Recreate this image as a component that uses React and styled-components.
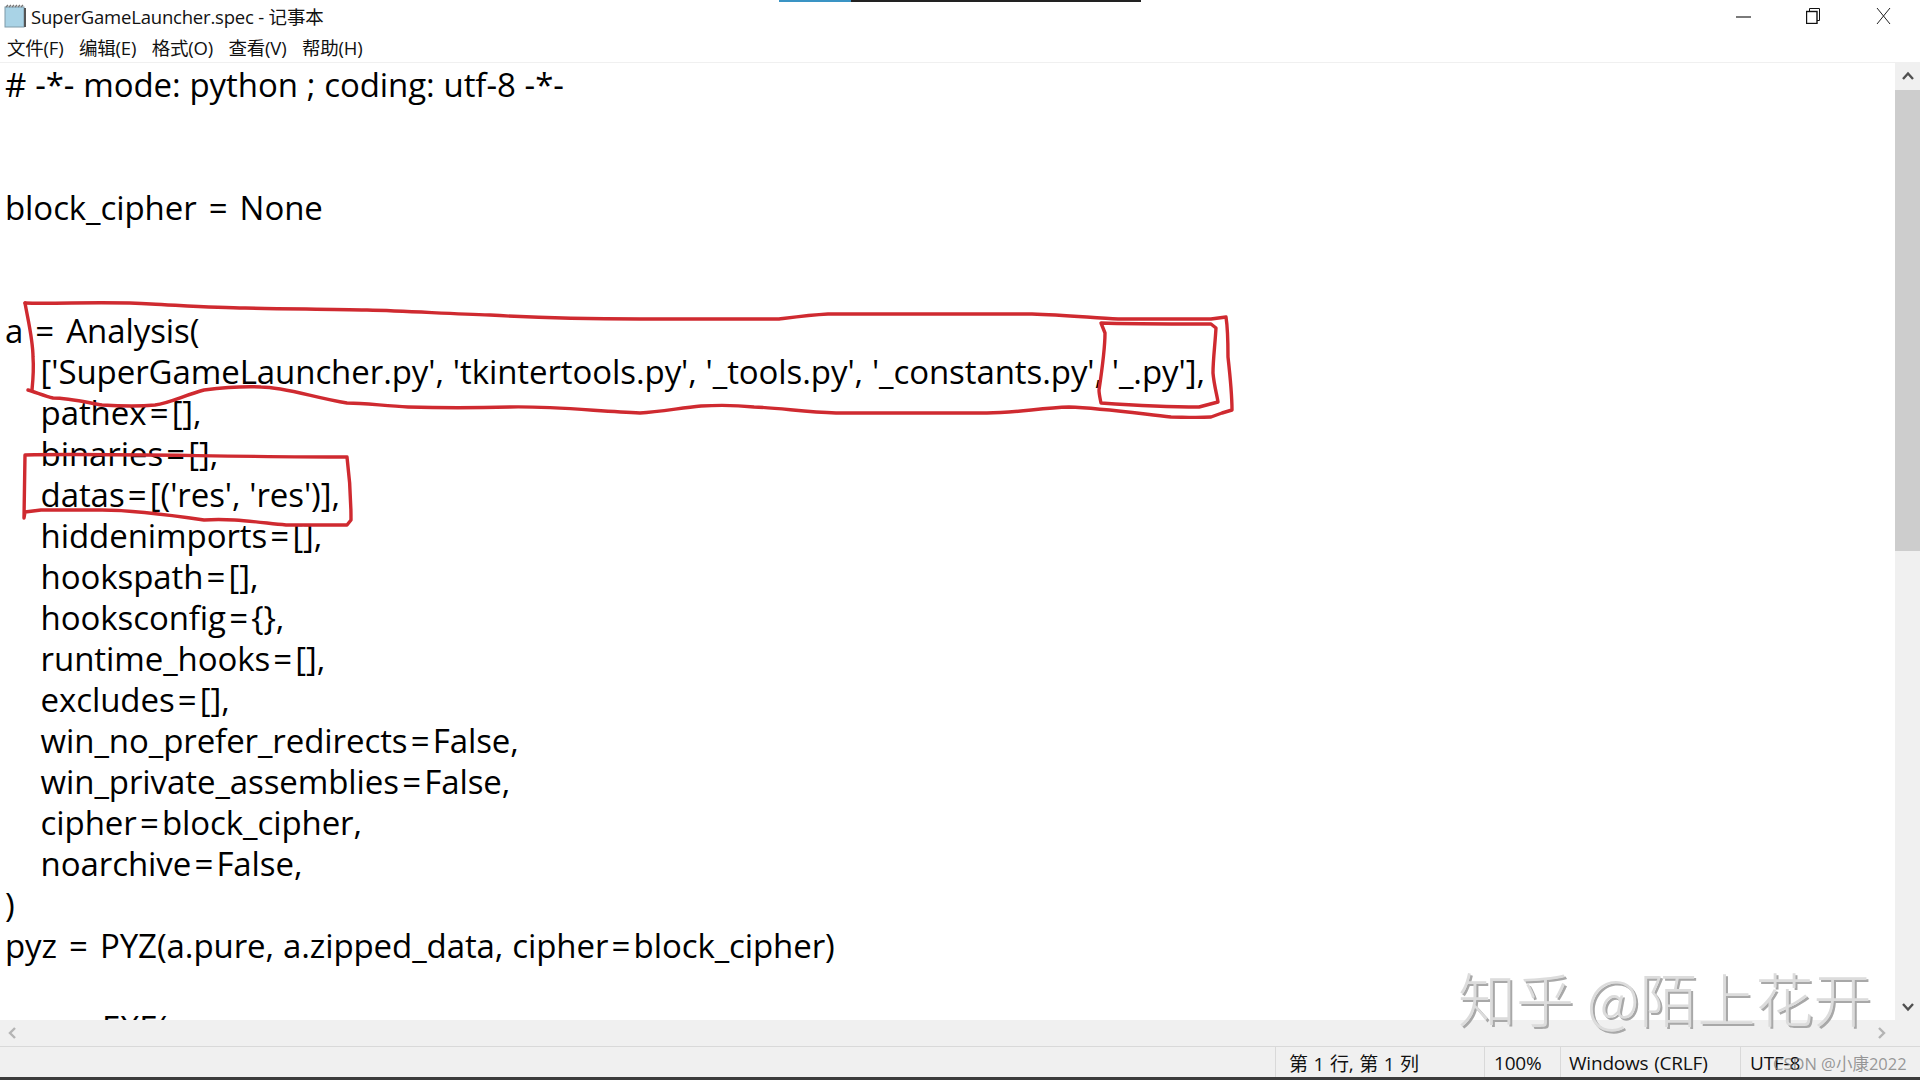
import styled, { createGlobalStyle } from 'styled-components';

const GlobalStyle = createGlobalStyle`
  html, body {
    margin: 0;
    padding: 0;
    background: #fff;
    overflow: hidden;
  }
`;

const uiFont = `"Open Sans", "Noto Sans CJK SC", sans-serif`;

const Window = styled.div`
  position: relative;
  width: 1920px;
  height: 1080px;
  display: flex;
  flex-flow: column;
  overflow: hidden;
  background: #fff;
  color: #000;
  font-family: ${uiFont};
`;

const TitleBar = styled.div`
  height: 32px;
  display: flex;
  align-items: center;
  padding-left: 3px;
  flex: none;
`;

const Title = styled.span`
  font-size: 18.5px;
  margin-left: 4px;
  color: #111;
  letter-spacing: -0.2px;
`;

const WindowButtons = styled.div`
  margin-left: auto;
  display: flex;
  align-items: center;
  gap: 55px;
  padding-right: 29px;
`;

const ProgressStrip = styled.div`
  position: absolute;
  top: 0;
  left: 779px;
  width: 362px;
  height: 2px;
  background: linear-gradient(to right, #3a94c4 72px, #222 72px);
`;

const MenuBar = styled.div`
  height: 30px;
  display: flex;
  align-items: center;
  gap: 15.5px;
  padding-left: 7px;
  flex: none;
  border-bottom: 1px solid #f0f0f0;
`;

const MenuItem = styled.span`
  font-size: 18.5px;
  color: #111;
  letter-spacing: -0.2px;
`;

const Body = styled.div`
  flex: 1;
  display: flex;
  min-height: 0;
`;

const Editor = styled.div`
  flex: 1;
  padding: 1px 0 0 5px;
  overflow: hidden;
  font-family: "Open Sans", sans-serif;
  font-size: 33px;
  letter-spacing: -0.08px;
  word-spacing: 0.4px;
  color: #000;
`;

const CodeLine = styled.div`
  height: 41px;
  line-height: 41px;
  white-space: pre;
`;

const VScroll = styled.div`
  width: 25px;
  flex: none;
  display: flex;
  flex-flow: column;
  background: #f0f0f0;
`;

const ScrollArrow = styled.div`
  height: ${(p) => p.$h}px;
  display: flex;
  align-items: center;
  justify-content: center;
  flex: none;
`;

const VThumb = styled.div`
  height: 461px;
  background: #cdcdcd;
  flex: none;
`;

const VTrack = styled.div`
  flex: 1;
`;

const HScroll = styled.div`
  height: 26px;
  flex: none;
  display: flex;
  align-items: center;
  justify-content: space-between;
  padding: 0 33px 0 7px;
  background: #f0f0f0;
  border-bottom: 1px solid #d9d9d9;
`;

const StatusBar = styled.div`
  height: 30px;
  flex: none;
  display: flex;
  justify-content: flex-end;
  background: #f0f0f0;
`;

const StatusCell = styled.div`
  width: ${(p) => p.$w}px;
  padding: 1px 0 0 ${(p) => p.$pad}px;
  box-sizing: border-box;
  border-left: 1px solid #d9d9d9;
  display: flex;
  align-items: center;
  font-size: 19px;
  letter-spacing: -0.2px;
  word-spacing: 1px;
  color: #111;
  white-space: pre;
`;

const BottomEdge = styled.div`
  height: 3px;
  flex: none;
  background: #3c3c3c;
`;

const Annotations = styled.svg`
  position: absolute;
  inset: 0;
  pointer-events: none;
`;

const Watermark = styled.div`
  position: absolute;
  left: 1458px;
  top: 957px;
  font-family: "Noto Sans CJK SC", sans-serif;
  font-weight: 300;
  font-size: 58px;
  line-height: 80px;
  white-space: pre;
  color: #dcdcdc;
  text-shadow: 2px 2px 0 #a8a8a8;
`;

const CsdnMark = styled.div`
  position: absolute;
  left: 1773px;
  top: 1052px;
  font-size: 16.5px;
  line-height: 24px;
  color: rgba(120, 120, 120, 0.75);
`;

// thin spaces round "=" stand in for the wider glyph of the original font
const codeLines = `# -*- mode: python ; coding: utf-8 -*-


block_cipher = None


a = Analysis(
    ['SuperGameLauncher.py', 'tkintertools.py', '_tools.py', '_constants.py', '_.py'],
    pathex=[],
    binaries=[],
    datas=[('res', 'res')],
    hiddenimports=[],
    hookspath=[],
    hooksconfig={},
    runtime_hooks=[],
    excludes=[],
    win_no_prefer_redirects=False,
    win_private_assemblies=False,
    cipher=block_cipher,
    noarchive=False,
)
pyz = PYZ(a.pure, a.zipped_data, cipher=block_cipher)

exe = EXE(`
  .replaceAll('=', '\u200a=\u200a')
  .split('\n');

const menus = ['文件(F)', '编辑(E)', '格式(O)', '查看(V)', '帮助(H)'];

function NotepadIcon() {
  return (
    <svg width="24" height="24" viewBox="0 0 24 24">
      <rect x="2" y="3" width="19" height="20" fill="#a9d3e6" stroke="#7f9aa8" />
      <rect x="21" y="4" width="2" height="19" fill="#555" />
      <path d="M3 3 L5 1 M6 3 L8 1 M9 3 L11 1 M12 3 L14 1 M15 3 L17 1 M18 3 L20 1" stroke="#777" strokeWidth="1.4" />
    </svg>
  );
}

function Chevron({ dir, color = '#505050' }) {
  const paths = {
    up: 'M1 8 L6 2.5 L11 8',
    down: 'M1 3 L6 8.5 L11 3',
    left: 'M8 1 L3 6 L8 11',
    right: 'M4 1 L9 6 L4 11',
  };
  return (
    <svg width="12" height="12" viewBox="0 0 12 12" fill="none">
      <path d={paths[dir]} stroke={color} strokeWidth="2.4" />
    </svg>
  );
}

function App() {
  return (
    <>
      <GlobalStyle />
      <Window>
        <TitleBar>
          <NotepadIcon />
          <Title>SuperGameLauncher.spec - 记事本</Title>
          <WindowButtons>
            <svg width="15" height="15" viewBox="0 0 15 15">
              <path d="M0 8 H15" stroke="#222" strokeWidth="1.2" />
            </svg>
            <svg width="15" height="16" viewBox="0 0 15 16" fill="none" stroke="#111">
              <path d="M3.5 3 V0.5 H13.5 V12.5 H11" />
              <rect x="0.5" y="3.5" width="10.5" height="12" strokeWidth="1.4" />
            </svg>
            <svg width="15" height="16" viewBox="0 0 15 16" fill="none" stroke="#222">
              <path d="M1 0 L14 16 M14 0 L1 16" />
            </svg>
          </WindowButtons>
        </TitleBar>
        <MenuBar>
          {menus.map((m) => (
            <MenuItem key={m}>{m}</MenuItem>
          ))}
        </MenuBar>
        <Body>
          <Editor>
            {codeLines.map((line, i) => (
              <CodeLine key={i}>{line}</CodeLine>
            ))}
          </Editor>
          <VScroll>
            <ScrollArrow $h={27}>
              <Chevron dir="up" />
            </ScrollArrow>
            <VThumb />
            <VTrack />
            <ScrollArrow $h={27}>
              <Chevron dir="down" />
            </ScrollArrow>
          </VScroll>
        </Body>
        <HScroll>
          <Chevron dir="left" color="#b4b4b4" />
          <Chevron dir="right" color="#b4b4b4" />
        </HScroll>
        <StatusBar>
          <StatusCell $w={209} $pad={13}>第 1 行, 第 1 列</StatusCell>
          <StatusCell $w={76} $pad={9}>100%</StatusCell>
          <StatusCell $w={180} $pad={8}>Windows (CRLF)</StatusCell>
          <StatusCell $w={180} $pad={9}>UTF-8</StatusCell>
        </StatusBar>
        <BottomEdge />
        <ProgressStrip />
        <Annotations viewBox="0 0 1920 1080" width="1920" height="1080" fill="none" stroke="#cf2a30" strokeWidth="3.4" strokeLinejoin="round" strokeLinecap="round">
          <path d="M25 303 C60 304 110 301 151 304 C190 306 220 308 245 308 C290 309 330 309 367 310 C410 311 450 314 490 315 C540 318 590 319 640 319 L779 319 C795 317 810 315 828 314 L1032 314 C1065 315 1095 318 1118 319 C1150 319 1180 319 1211 319 L1226 317 C1228 330 1228 345 1228 357 C1230 375 1232 395 1232 410 L1222 413 L1211 417 C1195 418 1182 417 1171 417 C1135 413 1100 408 1069 407 C1040 408 1015 413 987 413 L836 413 C805 412 780 408 754 407 C735 405 718 405 701 406 C680 408 660 412 640 413 C595 411 550 406 510 407 C475 408 440 408 408 407 C385 406 365 403 347 403 C315 398 285 387 261 387 C240 386 220 388 204 390 C185 395 170 403 155 405 C135 407 118 406 102 405 C85 402 68 398 53 398 C45 396 35 392 28 390" />
          <path d="M25 303 C28 320 33 340 33 357 C34 370 33 380 32 390" />
          <path d="M1101 323 C1125 324 1180 324 1211 324 L1216 328 C1215 345 1213 360 1213 373 C1214 385 1217 395 1218 402 L1199 407 C1170 407 1130 405 1101 403 C1100 398 1099 394 1099 390 C1102 370 1105 350 1105 333 Z" />
          <path d="M25 455 C100 453 230 457 347 457 C350 480 351 505 351 520 L347 525 L286 525 C255 522 230 518 204 520 C170 515 135 510 102 510 C80 510 60 510 41 510 L25 512 L24 518 Z" />
        </Annotations>
        <Watermark>知乎 @陌上花开</Watermark>
        <CsdnMark>CSDN @小康2022</CsdnMark>
      </Window>
    </>
  );
}

export default App;
